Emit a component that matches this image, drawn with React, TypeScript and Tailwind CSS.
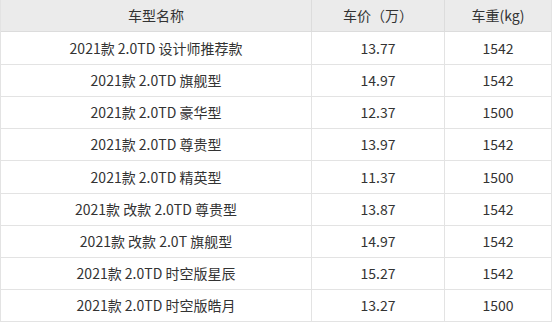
const rows = [
  { name: "2021款 2.0TD 设计师推荐款", price: "13.77", weight: "1542" },
  { name: "2021款 2.0TD 旗舰型", price: "14.97", weight: "1542" },
  { name: "2021款 2.0TD 豪华型", price: "12.37", weight: "1500" },
  { name: "2021款 2.0TD 尊贵型", price: "13.97", weight: "1542" },
  { name: "2021款 2.0TD 精英型", price: "11.37", weight: "1500" },
  { name: "2021款 改款 2.0TD 尊贵型", price: "13.87", weight: "1542" },
  { name: "2021款 改款 2.0T 旗舰型", price: "14.97", weight: "1542" },
  { name: "2021款 2.0TD 时空版星辰", price: "15.27", weight: "1542" },
  { name: "2021款 2.0TD 时空版皓月", price: "13.27", weight: "1500" },
];

// a few rows are a pixel taller so the borders land where the screenshot has them
const heights = ["h-[33px]", "h-[32px]", "h-[32px]", "h-[32px]", "h-[33px]", "h-[32px]", "h-[32px]", "h-[32px]", "h-[32px]"];

export default function App() {
  return (
    <div
      className="h-[324px] w-[554px] overflow-hidden bg-white text-[14px] text-[#333]"
      style={{ fontFamily: '"Noto Sans CJK SC", "Noto Sans", sans-serif' }}
    >
      <div className="w-[552px] border-l border-r border-[#e3e3e3]">
        <div className="grid h-[32px] grid-cols-[311px_133px_106px] border-b border-[#dcdcdc] bg-[#ebebeb]">
          <div className="flex items-center justify-center border-r border-[#dcdcdc]">车型名称</div>
          <div className="flex items-center justify-center border-r border-[#dcdcdc]">车价（万）</div>
          <div className="flex items-center justify-center">车重(kg)</div>
        </div>
        {rows.map((r, i) => (
          <div
            key={i}
            className={`grid ${heights[i]} grid-cols-[311px_133px_106px] border-b border-[#e3e3e3]`}
          >
            <div className="flex items-center justify-center border-r border-[#e3e3e3]">{r.name}</div>
            <div className="flex items-center justify-center border-r border-[#e3e3e3]">{r.price}</div>
            <div className="flex items-center justify-center">{r.weight}</div>
          </div>
        ))}
      </div>
    </div>
  );
}
